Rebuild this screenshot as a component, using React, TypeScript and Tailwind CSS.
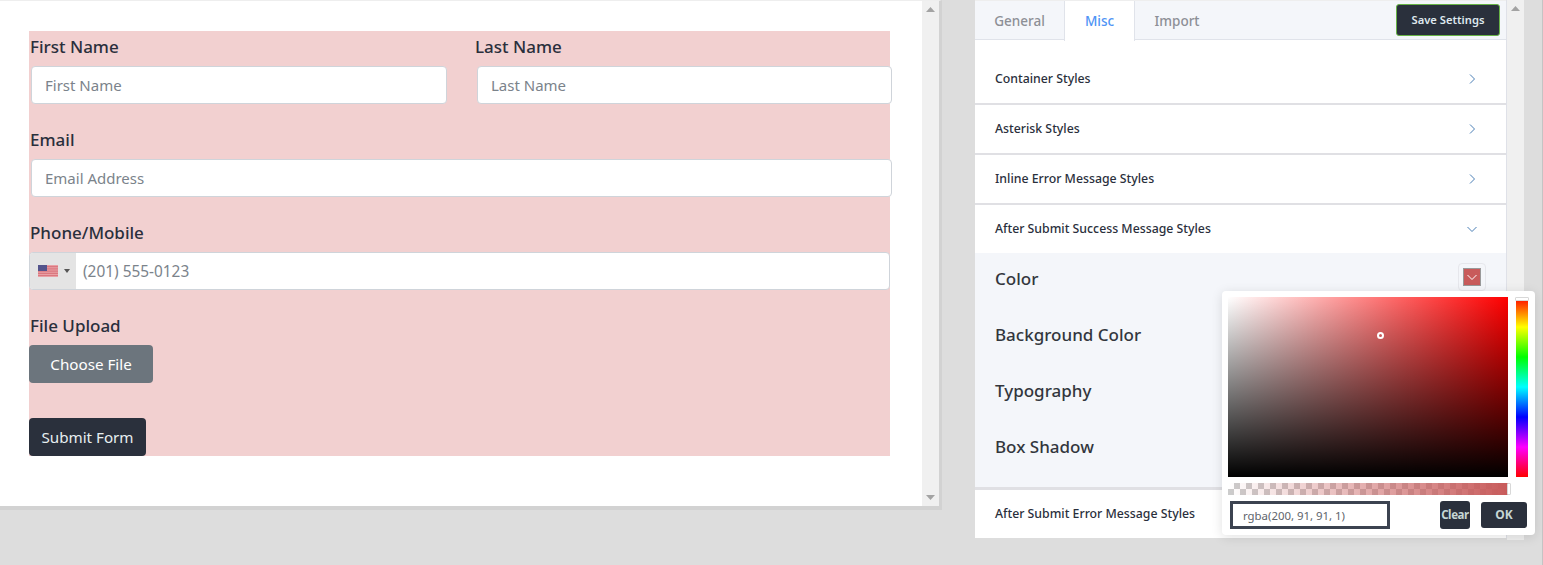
import React from "react";

function Arrow({ up }: { up?: boolean }) {
  return (
    <svg width="9" height="5" viewBox="0 0 9 5" className="fill-[#a3a3a3]">
      <path d={up ? "M0 5L4.5 0L9 5Z" : "M0 0L9 0L4.5 5Z"} />
    </svg>
  );
}

function Scrollbar({ className }: { className: string }) {
  return (
    <div className={"flex flex-col items-center justify-between py-[6px] bg-[#f0f0f0] " + className}>
      <Arrow up />
      <Arrow />
    </div>
  );
}

function Label({ children }: { children: React.ReactNode }) {
  return <div className="pl-px pt-[3px] h-[35px] text-[17px] leading-[26px] font-medium text-[#2a2f3c]">{children}</div>;
}

function TextInput({ placeholder, className }: { placeholder: string; className: string }) {
  return (
    <input
      placeholder={placeholder}
      className={"block h-[38px] bg-white border border-[#cfd4da] rounded-[4px] px-[13px] text-[15px] text-[#495057] placeholder:text-[#7b838b] outline-none " + className}
    />
  );
}

function Flag() {
  return (
    <svg width="20" height="12" viewBox="0 0 20 12">
      <rect width="20" height="12" fill="#eaa6aa" />
      <path d="M0 1.4H20M0 3.2H20M0 5H20M0 6.8H20M0 8.6H20M0 10.6H20" stroke="#d9737b" strokeWidth="1" />
      <rect width="9" height="6" fill="#54548c" />
    </svg>
  );
}

function Chevron({ down, className }: { down?: boolean; className: string }) {
  return (
    <svg width="10" height="10" viewBox="0 0 10 10" fill="none" className={className}>
      <path d={down ? "M0.5 3L5 7.5L9.5 3" : "M3 0.5L7.5 5L3 9.5"} stroke="currentColor" strokeWidth="1" />
    </svg>
  );
}

function AccordionRow({ title, open }: { title: string; open?: boolean }) {
  return (
    <div className="flex items-center justify-between h-[48px] pl-5 pr-[29px] bg-white text-[12.3px] font-medium text-[#2a2f3c]">
      <span>{title}</span>
      <Chevron down={open} className="text-[#4a7fb5]" />
    </div>
  );
}

function Separator() {
  return <div className="h-[2px] bg-[#e0e0e4]" />;
}

function StyleRow({ title }: { title: string }) {
  return <div className="flex items-center h-[56px] pb-[5px] pl-5 text-[17px] font-medium text-[#33363d]">{title}</div>;
}

export default function App() {
  return (
    <div className="relative flex items-start w-[1543px] h-[565px] overflow-hidden bg-[#dddddd] border-r border-[#c4c4c4] [font-family:'Noto_Sans',sans-serif]">
      {/* Left preview */}
      <div className="flex w-[942px] h-[510px] shrink-0 border-r-[3px] border-b-[4px] border-[#d2d2d2] border-t border-t-[#eeeeee] bg-white">
        <div className="flex-1 min-w-0 pl-[29px] pt-[30px]">
          <div className="w-[861px] h-[425px] bg-[#f2d0d0]">
            <div className="flex h-[93px]">
              <div className="w-[446px]">
                <Label>First Name</Label>
                <TextInput placeholder="First Name" className="ml-[2px] w-[416px]" />
              </div>
              <div className="w-[415px] -ml-px">
                <Label>Last Name</Label>
                <TextInput placeholder="Last Name" className="ml-[3px] w-[415px]" />
              </div>
            </div>
            <div className="h-[93px]">
              <Label>Email</Label>
              <TextInput placeholder="Email Address" className="ml-[2px] w-[861px]" />
            </div>
            <div className="h-[93px]">
              <Label>Phone/Mobile</Label>
              <div className="flex h-[38px] w-[861px] bg-white border border-[#cfd4da] rounded-[4px] overflow-hidden">
                <div className="flex items-center gap-[6px] w-[46px] shrink-0 pl-[8px] bg-[#e4e4e4]">
                  <Flag />
                  <span className="w-0 h-0 border-x-[3px] border-x-transparent border-t-[4px] border-t-[#555555]" />
                </div>
                <div className="flex items-center pl-[7px] pt-[2px] text-[15.4px] text-[#7b838b]">(201) 555-0123</div>
              </div>
            </div>
            <div className="h-[108px]">
              <Label>File Upload</Label>
              <button className="block w-[124px] h-[38px] rounded-[4px] bg-[#6c757d] text-[15.2px] text-white">Choose File</button>
            </div>
            <button className="block w-[117px] h-[38px] rounded-[4px] bg-[#2a303c] text-[15.2px] text-[#e6eef0]">Submit Form</button>
          </div>
        </div>
        <Scrollbar className="w-[17px] shrink-0" />
      </div>

      {/* Right settings */}
      <div className="flex ml-[33px] h-[540px] shrink-0">
        <div className="w-[532px] h-[538px] overflow-hidden border-r border-[#dfe1e8] bg-white">
          <div className="flex items-start justify-between h-[40px] bg-[#f4f6fa] border-b border-[#e0e3ea] border-t border-t-[#eeeeee] pr-[6px]">
            <div className="flex h-[40px] text-[13.5px] font-medium">
              <div className="flex items-center justify-center w-[89px] text-[#8d8f96]">General</div>
              <div className="flex items-center justify-center w-[71px] bg-white border-x border-[#e0e3ea] text-[#4f94f5]">Misc</div>
              <div className="flex items-center justify-center w-[84px] text-[#8d8f96]">Import</div>
            </div>
            <button className="w-[104px] h-[32px] mt-[3px] rounded-[3px] bg-[#2a303c] border border-[#67b346] text-[11.2px] font-semibold text-[#dfe8ee]">Save Settings</button>
          </div>
          <div className="h-[15px]" />
          <AccordionRow title="Container Styles" />
          <Separator />
          <AccordionRow title="Asterisk Styles" />
          <Separator />
          <AccordionRow title="Inline Error Message Styles" />
          <Separator />
          <AccordionRow title="After Submit Success Message Styles" open />
          <div className="h-[234px] bg-[#f4f6fa]">
            <div className="relative">
              <StyleRow title="Color" />
              <div className="absolute right-[20px] top-[10px] flex items-center justify-center w-[28px] h-[28px] border border-[#e6e7ec] rounded-[4px]">
                <div className="flex items-center justify-center w-[18px] h-[18px] bg-[#c85b5b] border border-[#999999]">
                  <Chevron down className="text-white" />
                </div>
              </div>
            </div>
            <StyleRow title="Background Color" />
            <StyleRow title="Typography" />
            <StyleRow title="Box Shadow" />
          </div>
          <div className="h-[3px] bg-[#e0e0e4]" />
          <AccordionRow title="After Submit Error Message Styles" />
        </div>
        <Scrollbar className="w-[17px] h-[540px]" />
      </div>

      {/* Colour picker popup */}
      <div className="absolute left-[1222px] top-[291px] w-[313px] h-[244px] p-[6px] bg-white rounded-[4px] shadow-[0_2px_12px_rgba(0,0,0,0.12)]">
        <div className="flex justify-between w-[300px]">
          <div className="relative w-[280px] h-[180px] bg-[linear-gradient(to_top,#000,transparent),linear-gradient(to_right,#fff,#ff0000)]">
            <div className="absolute left-[149px] top-[35px] w-[7px] h-[7px] rounded-full border-2 border-white" />
          </div>
          <div className="relative w-[12px] h-[180px] bg-[linear-gradient(to_bottom,#ff0000,#ffff00,#00ff00,#00ffff,#0000ff,#ff00ff,#ff0000)]">
            <div className="absolute -left-px top-0 w-[14px] h-[4px] bg-white border border-[#d8d8d8] rounded-[1px]" />
          </div>
        </div>
        <div className="relative w-[280px] h-[12px] mt-[6px] bg-[repeating-conic-gradient(#cccccc_0_25%,#ffffff_0_50%)] bg-[length:12px_12px]">
          <div className="h-full bg-[linear-gradient(to_right,rgba(200,91,91,0),#c85b5b)]" />
          <div className="absolute right-[-3px] top-0 w-[4px] h-[12px] bg-white border border-[#d8d8d8] rounded-[1px]" />
        </div>
        <div className="flex items-start mt-[6px] ml-[2px]">
          <input
            readOnly
            value="rgba(200, 91, 91, 1)"
            className="w-[160px] h-[28px] border-[3px] border-[#3c4350] pl-[10px] text-[11.4px] text-[#60646c] outline-none"
          />
          <button className="w-[30px] h-[28px] ml-[50px] rounded-[3px] bg-[#2a303c] text-[11.5px] tracking-[-0.4px] font-bold text-[#c6d6d4] whitespace-nowrap overflow-hidden">Clear</button>
          <button className="w-[46px] h-[26px] mt-px ml-[11px] rounded-[3px] bg-[#2a303c] text-[12px] font-bold text-[#c6d6d4]">OK</button>
        </div>
      </div>
    </div>
  );
}
